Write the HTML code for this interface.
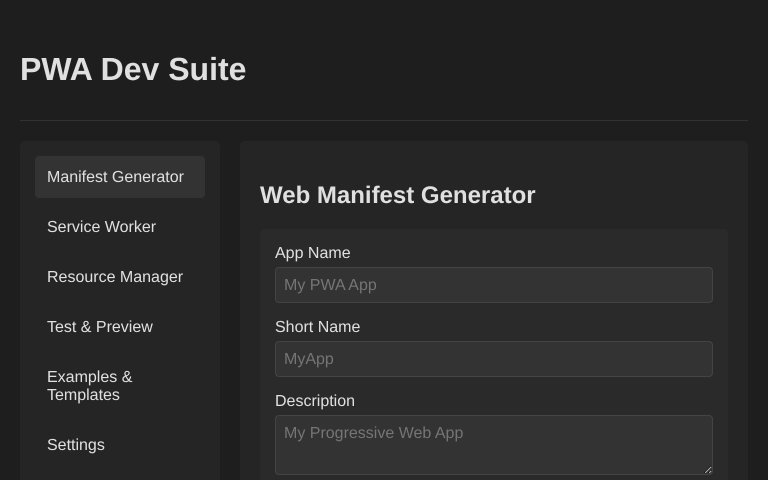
<!DOCTYPE html>
<html lang="en">
<head>
<meta charset="utf-8">
<title>PWA Dev Suite</title>
<style>
*{box-sizing:border-box}
html,body{margin:0;padding:0;width:768px;height:480px;overflow:hidden;background:#1e1e1e}
body{font-family:"Liberation Sans",Arial,sans-serif;color:#e0e0e0;font-size:16px;position:relative;text-rendering:geometricPrecision}
h1{position:absolute;left:20px;top:51px;margin:0;font-size:32px;line-height:37px;font-weight:700;color:#e0e0e0}
.rule{position:absolute;left:20px;top:120px;width:728px;height:1px;background:#333}
.side{position:absolute;left:20px;top:141px;width:200px;height:339px;background:#252525;border-radius:5px 5px 0 0}
.btn{position:absolute;left:15px;width:170px;padding:13px 12px 11px;border-radius:4px;line-height:18px;font-size:16px;color:#e0e0e0}
.btn.on{background:#333}
.main{position:absolute;left:240px;top:141px;width:508px;height:339px;background:#252525;border-radius:5px 5px 0 0}
h2{position:absolute;left:20px;top:41px;margin:0;font-size:24px;line-height:28px;font-weight:700;color:#e0e0e0}
.card{position:absolute;left:20px;top:88px;width:468px;height:251px;background:#2a2a2a;border-radius:5px 5px 0 0}
label{position:absolute;left:15px;line-height:18px;font-size:16px;color:#e0e0e0}
input,textarea{position:absolute;left:15px;width:438px;margin:0;padding:9px 8px 7px;background:#333;border:1px solid #444;border-radius:4px;color:#e0e0e0;font-family:"Liberation Sans",Arial,sans-serif;font-size:16px;line-height:18px;outline:none;text-rendering:geometricPrecision}
input{height:36px}
textarea{height:60px;resize:vertical;display:block}
::placeholder{color:#757575;opacity:1}
</style>
</head>
<body>
<h1>PWA Dev Suite</h1>
<div class="rule"></div>
<div class="side">
  <div class="btn on" style="top:15px">Manifest Generator</div>
  <div class="btn" style="top:65px">Service Worker</div>
  <div class="btn" style="top:115px">Resource Manager</div>
  <div class="btn" style="top:165px">Test &amp; Preview</div>
  <div class="btn" style="top:215px">Examples &amp; Templates</div>
  <div class="btn" style="top:283px">Settings</div>
</div>
<div class="main">
  <h2>Web Manifest Generator</h2>
  <div class="card">
    <label style="top:16px">App Name</label>
    <input type="text" placeholder="My PWA App" style="top:38px">
    <label style="top:90px">Short Name</label>
    <input type="text" placeholder="MyApp" style="top:112px">
    <label style="top:164px">Description</label>
    <textarea placeholder="My Progressive Web App" style="top:186px"></textarea>
  </div>
</div>
</body>
</html>
